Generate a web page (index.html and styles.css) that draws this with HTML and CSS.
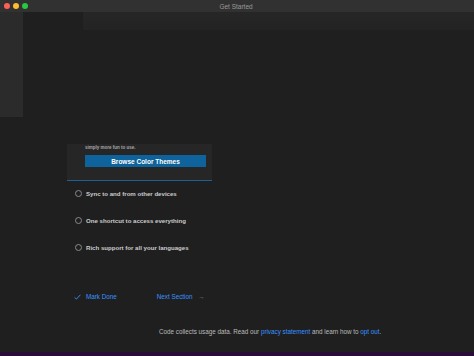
FILE: index.html
```html
<html>
<head>
	<meta http-equiv="Content-Type" content="text/html; charset=utf-8" />
	<link rel="stylesheet" href="styles.css">
</head>
<body class="desk">
<div class="window">
	<div class="titlebar">
		<div class="lights">
			<span class="light red"></span>
			<span class="light yellow"></span>
			<span class="light green"></span>
		</div>
		<div class="title">Get Started</div>
	</div>
	<div class="workbench">
		<div class="activity"></div>
		<div class="editor">
			<div class="tabs">
				<div class="tabgap"></div>
				<div class="tabstrip"></div>
			</div>
			<div class="page">
				<div class="steps">
					<div class="card">
						<p class="cardtext">simply more fun to use.</p>
						<div class="button">Browse Color Themes</div>
					</div>
					<div class="step"><span class="radio"></span>Sync to and from other devices</div>
					<div class="step"><span class="radio"></span>One shortcut to access everything</div>
					<div class="step"><span class="radio"></span>Rich support for all your languages</div>
					<div class="actions">
						<span class="action done">
							<svg width="7" height="6" viewBox="0 0 7 6"><path d="M0.6 3.4 L2.4 5.1 L6.4 0.8" fill="none" stroke="#3794ff" stroke-width="0.9"/></svg>
							Mark Done
						</span>
						<span class="action next">Next Section <span class="arrow">&rarr;</span></span>
					</div>
				</div>
				<div class="footer">Code collects usage data. Read our <span class="link">privacy statement</span> and learn how to <span class="link">opt out</span>.</div>
			</div>
		</div>
	</div>
</div>
</body>
</html>
```

FILE: styles.css
```css
        body {margin:0; font-family:"Liberation Sans", Arial, sans-serif;}
		.desk {width:474px; height:356px; overflow:hidden; background:#2a0c38;}
		.window {width:474px; height:352px; background:#1f1f1f; display:flex; flex-direction:column; overflow:hidden;}
		.titlebar {height:12px; background:#313131; display:flex; align-items:center;}
		.lights {display:flex; gap:3px; padding-left:4px;}
		.light {width:6px; height:6px; border-radius:50%; display:block;}
		.red {background:#fe5f57;}
		.yellow {background:#febc2e;}
		.green {background:#28c840;}
		.title {flex:1; text-align:center; font-size:6.5px; color:#9a9a9a; margin-right:30px;}
		.workbench {flex:1; display:flex;}
		.activity {width:23px; height:105px; background:#2b2b2b;}
		.editor {flex:1; display:flex; flex-direction:column;}
		.tabs {height:18px; display:flex;}
		.tabgap {width:60px;}
		.tabstrip {flex:1; background:linear-gradient(#262626, #232323);}
		.page {flex:1; display:flex; flex-direction:column;}
		.steps {margin-left:44px; margin-top:114px; width:145px;}
		.card {background:#262626; border-bottom:1px solid #1e5f94; padding:0 6px 0 18px; height:36px;}
		.cardtext {margin:0; font-size:4.5px; color:#a8a8a8; line-height:7px; font-weight:bold;}
		.button {margin-top:4px; height:12px; background:#0e639c; color:#ffffff; font-size:6.5px; font-weight:bold; display:flex; align-items:center; justify-content:center;}
		.step {display:flex; align-items:center; height:27px; font-size:6.1px; font-weight:bold; color:#cccccc; padding-left:8px;}
		.card + .step {margin-top:-1px;}
		.radio {width:5px; height:5px; border:1px solid #8a8a8a; border-radius:50%; margin-right:4px;}
		.actions {display:flex; margin-top:32px; padding-left:7px; font-size:6.3px; color:#3794ff;}
		.action {display:flex; align-items:center;}
		.done svg {margin-right:5px;}
		.next {margin-left:40px;}
		.arrow {color:#999999; margin-left:6px; font-size:6px;}
		.footer {margin-top:28px; padding-left:136px; font-size:6.3px; color:#bbbbbb;}
		.link {color:#3794ff;}
```
